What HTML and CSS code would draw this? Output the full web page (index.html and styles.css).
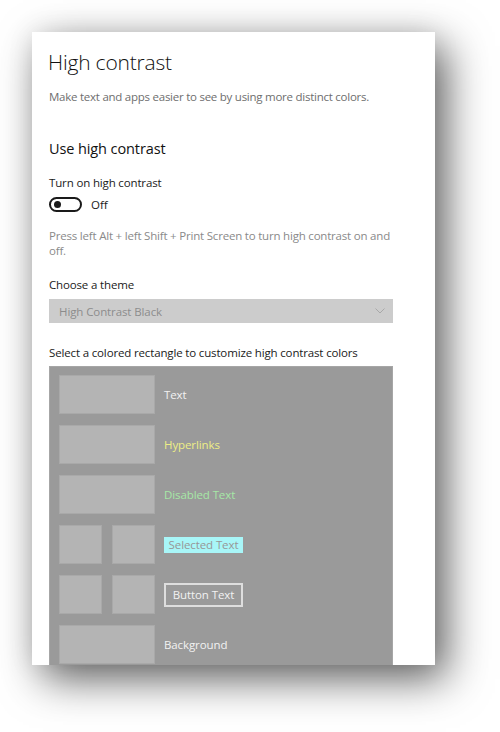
FILE: index.html
```html
<!DOCTYPE html>
<html lang="en">
<head>
<meta charset="utf-8">
<title>High contrast</title>
<link rel="stylesheet" href="styles.css">
</head>
<body>
<div class="stage">
  <div class="panel">
    <h1 class="title">High contrast</h1>
    <p class="subtitle">Make text and apps easier to see by using more distinct colors.</p>

    <h2 class="section">Use high contrast</h2>
    <div class="label">Turn on high contrast</div>
    <div class="toggle-row">
      <span class="toggle"><span class="knob"></span></span>
      <span class="toggle-text">Off</span>
    </div>
    <p class="hint">Press left Alt + left Shift + Print Screen to turn high contrast on and off.</p>

    <div class="label theme-label">Choose a theme</div>
    <div class="dropdown">
      <span>High Contrast Black</span>
      <svg class="chev" width="10" height="6" viewBox="0 0 10 6"><path d="M0.5 0.5 L5 5 L9.5 0.5" fill="none" stroke="#a8a8a8" stroke-width="1"/></svg>
    </div>

    <div class="label select-label">Select a colored rectangle to customize high contrast colors</div>
    <div class="colors">
      <div class="crow">
        <div class="sw-wrap"><div class="sw"></div></div>
        <span class="clabel c-text">Text</span>
      </div>
      <div class="crow">
        <div class="sw-wrap"><div class="sw"></div></div>
        <span class="clabel c-link">Hyperlinks</span>
      </div>
      <div class="crow">
        <div class="sw-wrap"><div class="sw"></div></div>
        <span class="clabel c-disabled">Disabled Text</span>
      </div>
      <div class="crow">
        <div class="sw-wrap"><div class="sw half"></div><div class="sw half"></div></div>
        <span class="clabel c-selected">Selected Text</span>
      </div>
      <div class="crow">
        <div class="sw-wrap"><div class="sw half"></div><div class="sw half"></div></div>
        <span class="clabel c-button">Button Text</span>
      </div>
      <div class="crow">
        <div class="sw-wrap"><div class="sw"></div></div>
        <span class="clabel c-text">Background</span>
      </div>
    </div>
  </div>
</div>
</body>
</html>
```
FILE: styles.css
```css
html, body {
  margin: 0;
  padding: 0;
  background: #ffffff;
}
body {
  width: 500px;
  height: 732px;
  overflow: hidden;
  font-family: "Open Sans", "Noto Sans", sans-serif;
}
.stage {
  padding: 32px 0 0 32px;
}
.panel {
  width: 403px;
  height: 633px;
  box-sizing: border-box;
  padding: 0 0 0 17px;
  background: #ffffff;
  overflow: hidden;
  box-shadow: 11px 14px 40px rgba(0, 0, 0, 0.62), 0 0 26px rgba(0, 0, 0, 0.08);
}
.title {
  margin: 16px 0 0 -1px;
  font-size: 21px;
  font-weight: 300;
  line-height: 28px;
  color: #111;
  letter-spacing: -0.2px;
}
.subtitle {
  margin: 13px 0 0 0;
  font-size: 11.5px;
  line-height: 16px;
  color: #6e6e6e;
  letter-spacing: -0.25px;
}
.section {
  margin: 34px 0 0 0;
  font-size: 14.5px;
  font-weight: 400;
  line-height: 20px;
  color: #111;
  letter-spacing: -0.1px;
}
.label {
  font-size: 11.5px;
  line-height: 16px;
  color: #1a1a1a;
  letter-spacing: -0.15px;
}
.section + .label {
  margin-top: 16px;
}
.toggle-row {
  display: flex;
  align-items: center;
  gap: 9px;
  margin-top: 5px;
  height: 16px;
}
.toggle {
  width: 33px;
  height: 15px;
  box-sizing: border-box;
  border: 2px solid #1a1a1a;
  border-radius: 8px;
  display: flex;
  align-items: center;
  padding-left: 3px;
}
.knob {
  width: 7px;
  height: 7px;
  border-radius: 50%;
  background: #1a1a1a;
}
.toggle-text {
  font-size: 11.5px;
  color: #1a1a1a;
}
.hint {
  margin: 16px 0 0 0;
  width: 350px;
  font-size: 11.5px;
  line-height: 15px;
  color: #8a8a8a;
  letter-spacing: -0.2px;
}
.theme-label {
  margin-top: 19px;
}
.dropdown {
  margin-top: 6px;
  width: 344px;
  height: 24px;
  box-sizing: border-box;
  background: #cccccc;
  display: flex;
  align-items: center;
  justify-content: space-between;
  padding: 0 8px 0 10px;
  font-size: 11.5px;
  color: #8c8c8c;
  letter-spacing: -0.1px;
}
.chev {
  display: block;
}
.select-label {
  margin-top: 22px;
}
.colors {
  margin-top: 5px;
  width: 344px;
  height: 320px;
  box-sizing: border-box;
  background: #9a9a9a;
  border: 1px solid #a6a6a6;
  padding: 8px 0 0 9px;
  display: flex;
  flex-direction: column;
  gap: 11px;
}
.crow {
  display: flex;
  align-items: center;
  gap: 9px;
  height: 39px;
}
.sw-wrap {
  display: flex;
  gap: 10px;
  width: 96px;
  height: 39px;
}
.sw {
  flex: 1;
  background: #b4b4b4;
  border: 1px solid #a9a9a9;
  box-sizing: border-box;
}
.sw.half {
  flex: 0 0 43px;
}
.clabel {
  font-size: 11.5px;
  letter-spacing: -0.1px;
}
.c-text { color: #f2f2f2; }
.c-link { color: #eeee86; }
.c-disabled { color: #a6e8a6; }
.c-selected {
  background: #a8f6f8;
  color: #979797;
  width: 79px;
  height: 16px;
  line-height: 16px;
  text-align: center;
}
.c-button {
  color: #f2f2f2;
  width: 79px;
  height: 24px;
  box-sizing: border-box;
  border: 2px solid #dedede;
  display: flex;
  align-items: center;
  justify-content: center;
}
```
